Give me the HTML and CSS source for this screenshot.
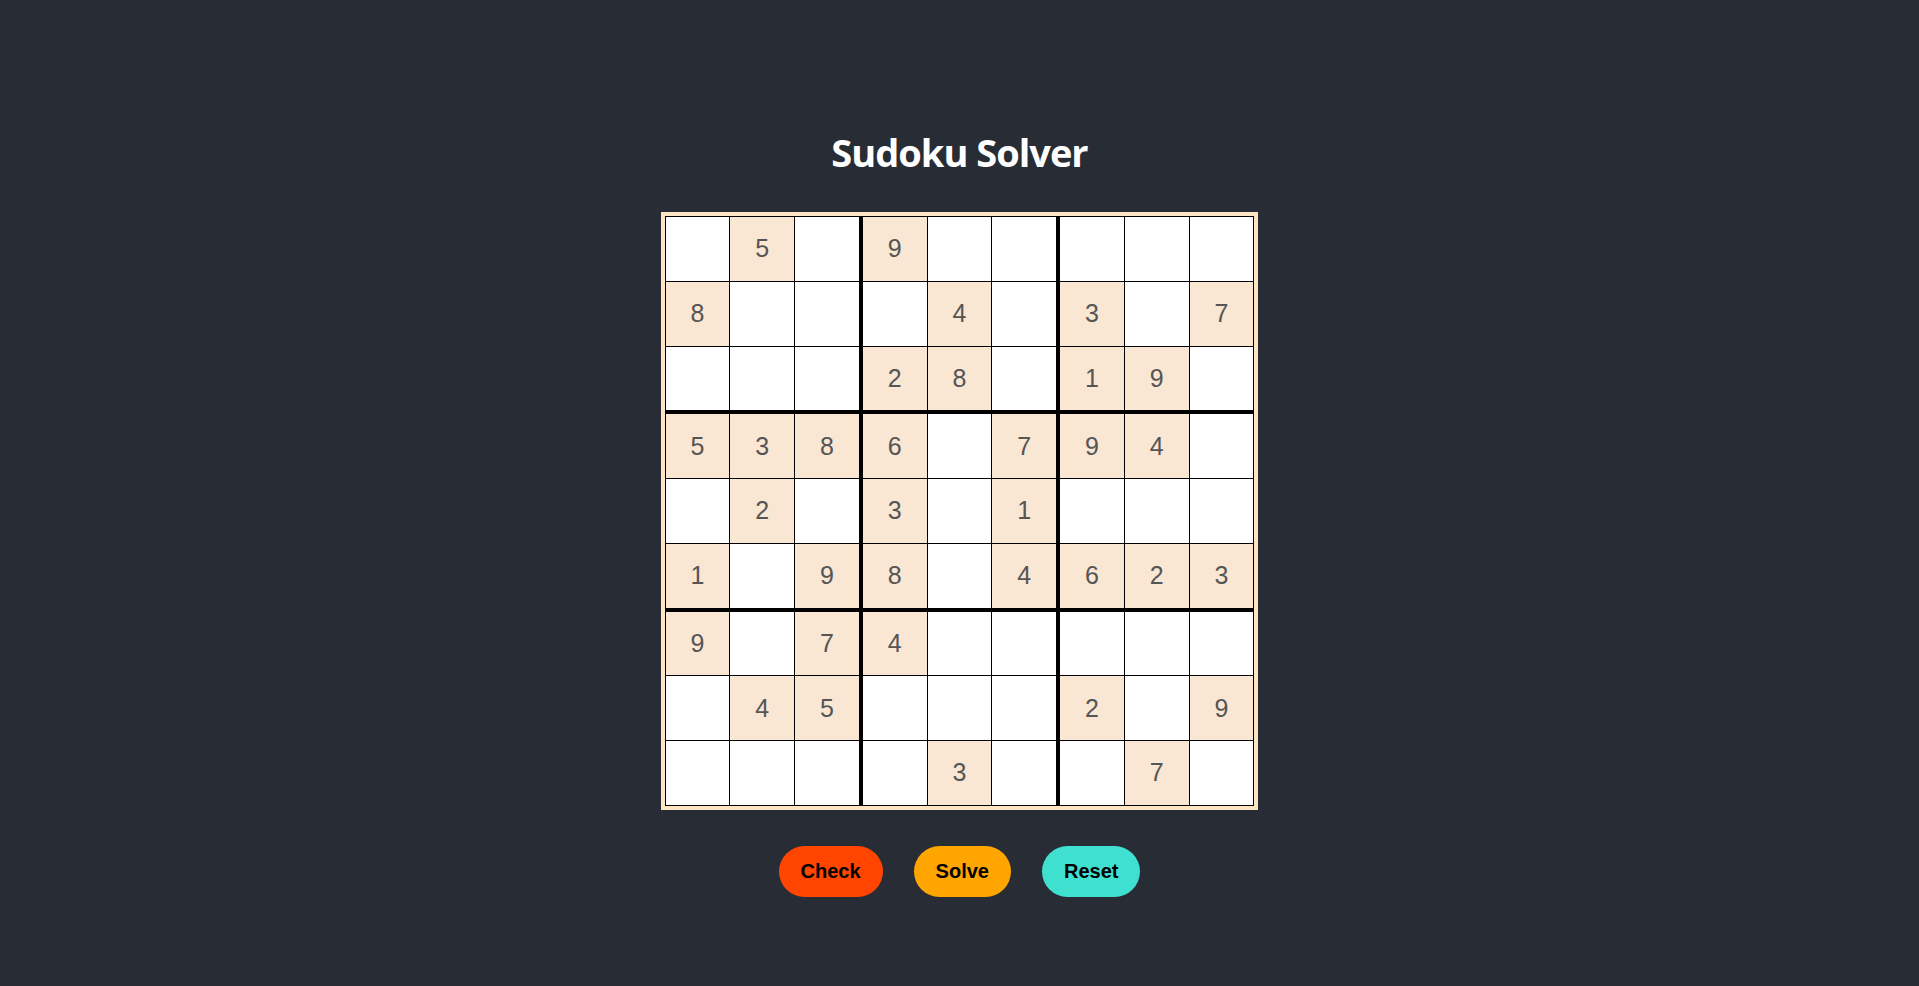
FILE: index.html
```html
<!DOCTYPE html>
<html lang="en">
<head>
    <meta charset="UTF-8">
    <title>Sudoku Solver</title>
    <link rel="stylesheet" href="styles.css">
</head>
<body>
    <div class="app">
        <h1 class="title">Sudoku Solver</h1>

        <div class="board-frame">
            <div class="board">
                <div class="cell"></div><div class="cell given">5</div><div class="cell"></div>
                <div class="cell given">9</div><div class="cell"></div><div class="cell"></div>
                <div class="cell"></div><div class="cell"></div><div class="cell"></div>

                <div class="cell given">8</div><div class="cell"></div><div class="cell"></div>
                <div class="cell"></div><div class="cell given">4</div><div class="cell"></div>
                <div class="cell given">3</div><div class="cell"></div><div class="cell given">7</div>

                <div class="cell"></div><div class="cell"></div><div class="cell"></div>
                <div class="cell given">2</div><div class="cell given">8</div><div class="cell"></div>
                <div class="cell given">1</div><div class="cell given">9</div><div class="cell"></div>

                <div class="cell given">5</div><div class="cell given">3</div><div class="cell given">8</div>
                <div class="cell given">6</div><div class="cell"></div><div class="cell given">7</div>
                <div class="cell given">9</div><div class="cell given">4</div><div class="cell"></div>

                <div class="cell"></div><div class="cell given">2</div><div class="cell"></div>
                <div class="cell given">3</div><div class="cell"></div><div class="cell given">1</div>
                <div class="cell"></div><div class="cell"></div><div class="cell"></div>

                <div class="cell given">1</div><div class="cell"></div><div class="cell given">9</div>
                <div class="cell given">8</div><div class="cell"></div><div class="cell given">4</div>
                <div class="cell given">6</div><div class="cell given">2</div><div class="cell given">3</div>

                <div class="cell given">9</div><div class="cell"></div><div class="cell given">7</div>
                <div class="cell given">4</div><div class="cell"></div><div class="cell"></div>
                <div class="cell"></div><div class="cell"></div><div class="cell"></div>

                <div class="cell"></div><div class="cell given">4</div><div class="cell given">5</div>
                <div class="cell"></div><div class="cell"></div><div class="cell"></div>
                <div class="cell given">2</div><div class="cell"></div><div class="cell given">9</div>

                <div class="cell"></div><div class="cell"></div><div class="cell"></div>
                <div class="cell"></div><div class="cell given">3</div><div class="cell"></div>
                <div class="cell"></div><div class="cell given">7</div><div class="cell"></div>
            </div>
        </div>

        <div class="controls">
            <button class="btn btn-check">Check</button>
            <button class="btn btn-solve">Solve</button>
            <button class="btn btn-reset">Reset</button>
        </div>
    </div>
</body>
</html>
```

FILE: styles.css
```css
body {
    margin: 0;
    background-color: #282c34;
    font-family: "Liberation Sans", Arial, sans-serif;
}

.app {
    min-height: 100vh;
    display: flex;
    flex-direction: column;
    align-items: center;
    padding-top: 128px;
    box-sizing: border-box;
}

.title {
    margin: 0 0 36px;
    font-family: "Open Sans", "Noto Sans", sans-serif;
    font-size: 38px;
    line-height: 48px;
    letter-spacing: -1px;
    font-weight: 700;
    color: #fff;
}

.board-frame {
    padding: 4px;
    background-color: #ffe4c4;
}

.board {
    display: grid;
    grid-template-columns: repeat(9, auto);
    border-top: 1px solid #000;
    border-left: 1px solid #000;
    background: #fff;
}

.cell {
    width: 63.75px;
    height: 63.75px;
    display: flex;
    align-items: center;
    justify-content: center;
    border-right: 1px solid #000;
    border-bottom: 1px solid #000;
    font-size: 25px;
    color: #555;
    background-color: #fff;
}

.cell.given {
    background-color: #f9e6d3;
}

/* heavier lines between the 3x3 boxes */
.cell:nth-child(9n + 3),
.cell:nth-child(9n + 6) {
    border-right-width: 4px;
}

.cell:nth-child(n + 19):nth-child(-n + 27),
.cell:nth-child(n + 46):nth-child(-n + 54) {
    border-bottom-width: 4px;
}

.controls {
    display: flex;
    gap: 31px;
    margin-top: 36px;
}

.btn {
    height: 51px;
    padding: 0 22px;
    border: none;
    border-radius: 26px;
    font-family: "Liberation Sans", Arial, sans-serif;
    font-size: 20px;
    font-weight: 700;
    color: #000;
    cursor: pointer;
}

.btn-check {
    background-color: #ff4500;
}

.btn-solve {
    background-color: #ffa500;
}

.btn-reset {
    background-color: #40e0d0;
}
```
